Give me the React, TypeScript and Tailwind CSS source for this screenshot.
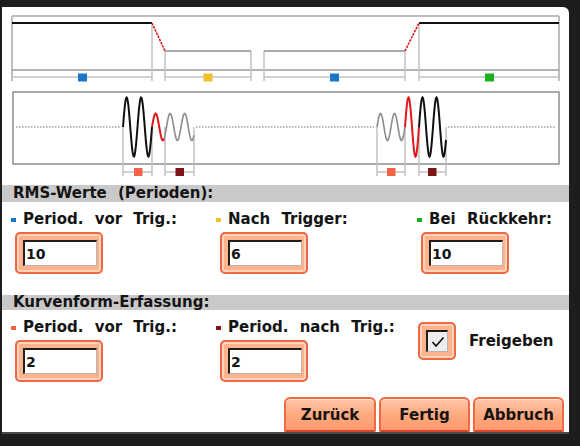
import React from 'react';

// sine wave helper: returns polyline points from x0 to x1
function wave(x0: number, x1: number, origin: number, period: number, amp: number, cy = 127) {
  const pts: string[] = [];
  for (let x = x0; x <= x1 + 0.001; x += 0.5) {
    const y = cy - amp * Math.sin((2 * Math.PI * (x - origin)) / period);
    pts.push(`${x.toFixed(1)},${y.toFixed(1)}`);
  }
  return pts.join(' ');
}

const Charts = () => {
  const grid = '#a9a9a9';
  const tick = '#c2c2c2';
  return (
    <svg width={567} height={178} viewBox="2 7 567 178" className="block">
      {/* ---- top chart: RMS level ---- */}
      <line x1={12} y1={16} x2={559} y2={16} stroke={grid} strokeWidth={1.5} />
      <line x1={12} y1={16} x2={12} y2={81} stroke={grid} strokeWidth={1.5} />
      <line x1={559} y1={16} x2={559} y2={81} stroke={grid} strokeWidth={1.5} />
      <line x1={12} y1={70} x2={559} y2={70} stroke="#9a9a9a" strokeWidth={1.5} />
      {[152, 165, 251, 264, 405, 419].map(x => (
        <line key={x} x1={x} y1={x === 152 || x === 419 ? 23 : 51} x2={x} y2={81} stroke={tick} strokeWidth={1.5} />
      ))}
      {[
        [12, 152],
        [165, 251],
        [264, 405],
        [419, 559],
      ].map(([a, b]) => (
        <line key={a} x1={a} y1={77} x2={b} y2={77} stroke={tick} strokeWidth={1.5} />
      ))}
      <line x1={12} y1={23} x2={152} y2={23} stroke="#111" strokeWidth={2} />
      <line x1={419} y1={23} x2={559} y2={23} stroke="#111" strokeWidth={2} />
      <line x1={165} y1={51} x2={251} y2={51} stroke="#8e8e8e" strokeWidth={1.5} />
      <line x1={264} y1={51} x2={405} y2={51} stroke="#8e8e8e" strokeWidth={1.5} />
      <line x1={152} y1={23} x2={165} y2={51} stroke="#e01818" strokeWidth={1.6} strokeDasharray="2.5 1" />
      <line x1={405} y1={51} x2={419} y2={23} stroke="#e01818" strokeWidth={1.6} strokeDasharray="2.5 1" />
      <rect x={78} y={73.5} width={9} height={8} fill="#1877c9" />
      <rect x={203.5} y={73.5} width={9} height={8} fill="#f3c12a" />
      <rect x={330} y={73.5} width={9} height={8} fill="#1877c9" />
      <rect x={485} y={73.5} width={9} height={8} fill="#19b019" />

      {/* ---- bottom chart: waveform capture ---- */}
      <rect x={13} y={92} width={546} height={72} fill="none" stroke="#8e8e8e" strokeWidth={1.5} />
      {[
        [16, 121],
        [196, 374],
        [448, 556],
      ].map(([a, b]) => (
        <line key={a} x1={a} y1={127} x2={b} y2={127} stroke="#6e6e6e" strokeWidth={1} strokeDasharray="1.5 1.5" />
      ))}
      {[123, 152, 165, 194, 377, 405, 419, 446].map(x => (
        <line key={x} x1={x} y1={127} x2={x} y2={176} stroke={tick} strokeWidth={1.5} />
      ))}
      {[
        [123, 152],
        [165, 194],
        [377, 405],
        [419, 446],
      ].map(([a, b]) => (
        <line key={a} x1={a} y1={172} x2={b} y2={172} stroke={tick} strokeWidth={1.5} />
      ))}
      <polyline points={wave(164, 194, 123, 14.5, 13.5)} fill="none" stroke="#8c8c8c" strokeWidth={1.6} />
      <polyline points={wave(152, 164, 123, 14.5, 13.5)} fill="none" stroke="#e01818" strokeWidth={2} />
      <polyline points={wave(123, 152, 123, 14.5, 29.5)} fill="none" stroke="#111" strokeWidth={2} />
      <polyline points={wave(377, 405, 377, 14, 13.5)} fill="none" stroke="#8c8c8c" strokeWidth={1.6} />
      <polyline points={wave(405, 419, 405, 14, 29.5)} fill="none" stroke="#e01818" strokeWidth={2} />
      <polyline points={wave(419, 446, 405, 14, 29.5)} fill="none" stroke="#111" strokeWidth={2} />
      <rect x={134} y={168} width={8.5} height={8} fill="#f2634a" />
      <rect x={175.5} y={168} width={8.5} height={8} fill="#7e1414" />
      <rect x={387} y={168} width={8.5} height={8} fill="#f2634a" />
      <rect x={428} y={168} width={8.5} height={8} fill="#7e1414" />
    </svg>
  );
};

const Label = ({ color, text }: { color: string; text: string }) => (
  <div className="flex items-center h-[18px] leading-[18px]">
    <span className="w-[5px] h-[4px] mr-[7px] mt-[1px]" style={{ backgroundColor: color }} />
    <span>{text}</span>
  </div>
);

const NumBox = ({ value }: { value: string }) => (
  <div className="ml-[4px] w-[88px] h-[42px] rounded-[5px] border-2 border-[#ee6844] bg-[#ffb28c] shadow-[inset_0_0_0_2px_#ffd4bd] pl-[6px] pt-[6px]">
    <div className="w-[74px] h-[26px] bg-white border-t-2 border-l-2 border-[#1e1e1e] border-r border-b border-r-[#b5b5b5] border-b-[#b5b5b5] flex items-center pl-[1px] pt-[2px] text-[14px]">
      {value}
    </div>
  </div>
);

const Button = ({ text, w }: { text: string; w: string }) => (
  <div
    className={`${w} h-[35px] rounded-t-[6px] rounded-b-[2px] border-2 border-[#ef6a42] border-b-[#d8452a] bg-gradient-to-b from-[#ffc7a8] via-[#ffaa80] to-[#ff9a6c] shadow-[inset_0_1px_0_#ffe2d2] flex items-center justify-center pt-[2px]`}
  >
    {text}
  </div>
);

export default function App() {
  return (
    <div className="w-[580px] h-[446px] bg-[#1d1d1d] overflow-hidden font-['DejaVu_Sans',sans-serif] font-bold text-[15px] text-[#141414] [word-spacing:6px]">
      <div className="ml-[2px] mt-[7px] w-[567px] h-[425px] bg-white rounded-tr-[6px] flex flex-col shadow-[0_2px_0_#4a4a4a]">
        <Charts />

        {/* RMS section */}
        <div className="h-[17px] bg-[#c9c9c9] flex items-center pl-[11px] leading-none">RMS-Werte (Perioden):</div>
        <div className="mt-[8px] pl-[9px] grid grid-cols-[205px_201px_1fr]">
          <div>
            <Label color="#1877c9" text="Period. vor Trig.:" />
            <div className="mt-[4px]">
              <NumBox value="10" />
            </div>
          </div>
          <div>
            <Label color="#f3c12a" text="Nach Trigger:" />
            <div className="mt-[4px]">
              <NumBox value="6" />
            </div>
          </div>
          <div>
            <Label color="#19b019" text="Bei Rückkehr:" />
            <div className="mt-[4px]">
              <NumBox value="10" />
            </div>
          </div>
        </div>

        {/* waveform capture section */}
        <div className="mt-[21px] h-[15px] bg-[#c9c9c9] flex items-center pl-[11px] leading-none">Kurvenform-Erfassung:</div>
        <div className="mt-[8px] pl-[9px] grid grid-cols-[205px_201px_1fr]">
          <div>
            <Label color="#f2634a" text="Period. vor Trig.:" />
            <div className="mt-[4px]">
              <NumBox value="2" />
            </div>
          </div>
          <div>
            <Label color="#7e1414" text="Period. nach Trig.:" />
            <div className="mt-[4px]">
              <NumBox value="2" />
            </div>
          </div>
          <div className="flex items-start pt-[4px]">
            <div className="ml-[1px] w-[38px] h-[38px] rounded-[5px] border-2 border-[#ee6844] bg-[#ffb28c] shadow-[inset_0_0_0_2px_#ffd4bd] pl-[6px] pt-[6px]">
              <div className="w-[22px] h-[22px] bg-[#ededed] border-t-2 border-l-2 border-[#1e1e1e] border-r border-b border-r-[#b5b5b5] border-b-[#b5b5b5] flex items-center justify-center">
                <svg width={14} height={12} viewBox="0 0 14 12">
                  <path d="M1.5 6 L5 10 L12.5 1.5" fill="none" stroke="#111" strokeWidth={1.6} />
                </svg>
              </div>
            </div>
            <div className="ml-[13px] h-[38px] flex items-center">Freigeben</div>
          </div>
        </div>

        <div className="mt-auto flex justify-end gap-[3px] pr-[5px]">
          <Button text="Zurück" w="w-[92px]" />
          <Button text="Fertig" w="w-[91px]" />
          <Button text="Abbruch" w="w-[91px]" />
        </div>
      </div>
    </div>
  );
}
